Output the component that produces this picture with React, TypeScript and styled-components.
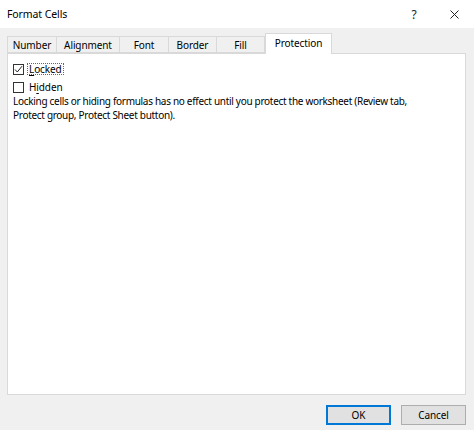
import React from "react";
import styled, { createGlobalStyle } from "styled-components";

const Global = createGlobalStyle`
  html, body { margin: 0; padding: 0; background: #f0f0f0; }
  * { box-sizing: border-box; }
`;

const Window = styled.div`
  width: 474px;
  height: 430px;
  background: #f0f0f0;
  display: flex;
  flex-direction: column;
  font-family: "Noto Sans", "Open Sans", sans-serif;
  font-size: 10px;
  color: #000;
  overflow: hidden;
`;

const TitleBar = styled.div`
  height: 28px;
  background: #fff;
  display: flex;
  align-items: center;
  padding: 0 0 0 7px;
`;

const Title = styled.div`
  flex: 1;
  font-size: 10.5px;
  letter-spacing: -0.1px;
  padding-bottom: 1px;
`;

const TitleBtn = styled.div`
  width: 40px;
  height: 28px;
  display: flex;
  align-items: center;
  justify-content: center;
  font-size: 12px;
  color: #222;
`;

const Body = styled.div`
  flex: 1;
  display: flex;
  flex-direction: column;
  padding: 3px 8px 0 7px;
`;

const TabStrip = styled.div`
  display: flex;
  align-items: flex-end;
  height: 22px;
  position: relative;
  z-index: 1;
`;

const Tab = styled.div<{ $w: number; $active?: boolean; $first?: boolean }>`
  width: ${(p) => p.$w}px;
  height: ${(p) => (p.$active ? 21 : 17)}px;
  margin-bottom: ${(p) => (p.$active ? -1 : 0)}px;
  background: ${(p) => (p.$active ? "#fff" : "#f0f0f0")};
  border: 1px solid #d9d9d9;
  border-bottom: ${(p) => (p.$active ? "none" : "1px solid #d9d9d9")};
  border-left: ${(p) => (p.$first || p.$active ? "1px solid #d9d9d9" : "none")};
  display: flex;
  align-items: center;
  justify-content: center;
  padding-bottom: ${(p) => (p.$active ? 3 : 0)}px;
  letter-spacing: -0.1px;
  white-space: nowrap;
`;

const Panel = styled.div`
  height: 342px;
  background: #fff;
  border: 1px solid #d9d9d9;
  padding: 6px 5px 0 5px;
  display: flex;
  flex-direction: column;
`;

const CheckRow = styled.div`
  display: flex;
  align-items: center;
  height: 18px;
  gap: 3px;
`;

const Box = styled.div`
  width: 11px;
  height: 11px;
  border: 1px solid #333;
  background: #fff;
  display: flex;
  align-items: center;
  justify-content: center;
`;

const Label = styled.span<{ $focus?: boolean }>`
  padding: 0 1px;
  height: 12px;
  line-height: 10px;
  border: 1px ${(p) => (p.$focus ? "dotted #666" : "solid transparent")};
  letter-spacing: -0.1px;
`;

const U = styled.span`
  text-decoration: underline;
  text-underline-offset: 1.5px;
`;

const Description = styled.p`
  margin: -1px 0 0 0;
  line-height: 13.5px;
  letter-spacing: -0.3px;
  width: 420px;
`;

const Footer = styled.div`
  display: flex;
  justify-content: flex-end;
  gap: 10px;
  padding: 10px 0 0 0;
`;

const Button = styled.button<{ $default?: boolean }>`
  width: 65px;
  height: 20px;
  font-family: inherit;
  font-size: 10px;
  letter-spacing: -0.1px;
  background: #e1e1e1;
  border: ${(p) => (p.$default ? "2px solid #0078d7" : "1px solid #adadad")};
  color: #000;
  padding: 0;
  display: flex;
  align-items: center;
  justify-content: center;
`;

const tabs = [
  { label: "Number", w: 50 },
  { label: "Alignment", w: 63 },
  { label: "Font", w: 49 },
  { label: "Border", w: 48 },
  { label: "Fill", w: 48 },
  { label: "Protection", w: 67, active: true },
];

export default function App() {
  return (
    <>
      <Global />
      <Window>
        <TitleBar>
          <Title>Format Cells</Title>
          <TitleBtn>?</TitleBtn>
          <TitleBtn>
            <svg width="9" height="9" viewBox="0 0 9 9">
              <path d="M0.5 0.5 L8.5 8.5 M8.5 0.5 L0.5 8.5" stroke="#222" strokeWidth="1" />
            </svg>
          </TitleBtn>
        </TitleBar>
        <Body>
          <TabStrip>
            {tabs.map((t, i) => (
              <Tab key={t.label} $w={t.w} $active={t.active} $first={i === 0}>
                {t.label}
              </Tab>
            ))}
          </TabStrip>
          <Panel>
            <CheckRow>
              <Box>
                <svg width="9" height="9" viewBox="0 0 9 9">
                  <path d="M1 4.5 L3.3 7 L8 1.2" stroke="#222" strokeWidth="1" fill="none" />
                </svg>
              </Box>
              <Label $focus>
                <U>L</U>ocked
              </Label>
            </CheckRow>
            <CheckRow>
              <Box />
              <Label>
                H<U>i</U>dden
              </Label>
            </CheckRow>
            <Description>
              Locking cells or hiding formulas has no effect until you protect the worksheet (Review tab,
              Protect group, Protect Sheet button).
            </Description>
          </Panel>
          <Footer>
            <Button $default>OK</Button>
            <Button>Cancel</Button>
          </Footer>
        </Body>
      </Window>
    </>
  );
}
